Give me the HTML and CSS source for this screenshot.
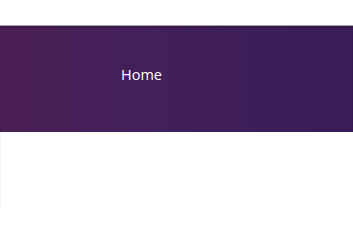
FILE: index.html
```html
<!DOCTYPE html>
<html lang="en">
<head>
  <meta charset="UTF-8">
  <meta name="viewport" content="width=device-width, initial-scale=1.0">
  <title>Home</title>
  <link rel="stylesheet" href="styles.css">
</head>
<body>
  <div class="top-space"></div>
  <header class="banner">
    <nav class="nav">
      <a class="nav-link" href="#">Home</a>
    </nav>
  </header>
  <main class="content">
    <div class="side-edge"></div>
  </main>
</body>
</html>
```

FILE: styles.css
```css
body {
  margin: 0;
  font-family: "Open Sans", Arial, sans-serif;
  background: #fff;
}
.top-space {
  height: 25px;
}
.banner {
  height: 106px;
  border-top: 1px solid #a49fa8;
  background: linear-gradient(90deg, #4a1f55 0%, #42205a 45%, #3a1c56 100%);
  box-shadow: inset 0 2px 2px rgba(0, 0, 0, 0.15);
}
.nav {
  display: flex;
  padding: 39px 0 0 121px;
}
.nav-link {
  color: #fff;
  text-decoration: none;
  font-size: 14.5px;
  line-height: 20px;
}
.content {
  display: flex;
}
.side-edge {
  width: 1px;
  height: 76px;
  background: #f2f2f2;
}
```
